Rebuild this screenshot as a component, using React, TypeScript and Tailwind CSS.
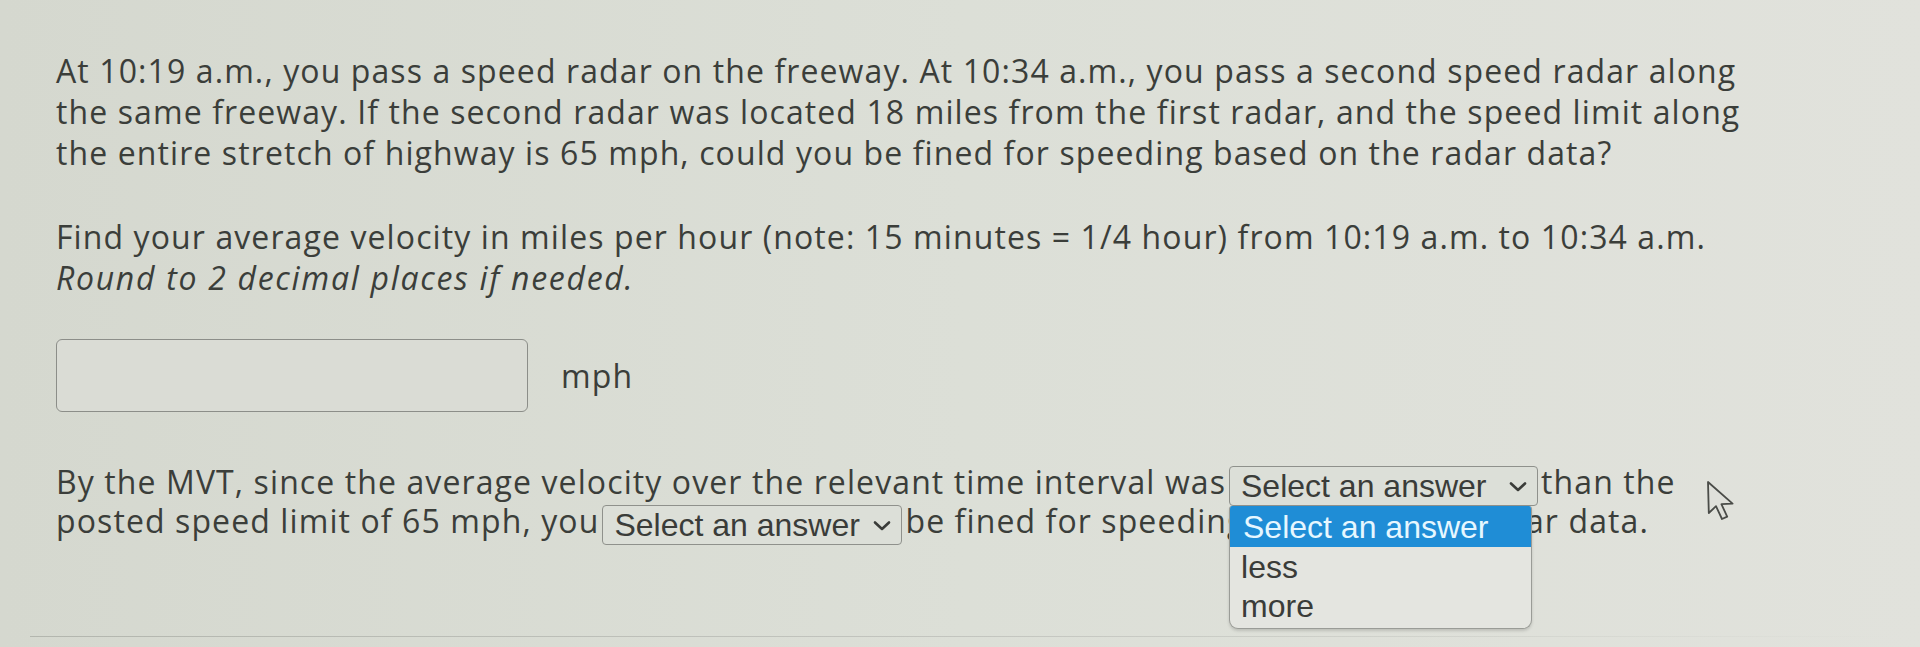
import React from 'react';

function Chevron() {
  return (
    <svg className="h-[11px] w-[18px]" viewBox="0 0 18 11" fill="none" stroke="#3a3c39" strokeWidth={2.6} strokeLinecap="round" strokeLinejoin="round">
      <path d="M2 2.5l7 6.5 7-6.5" />
    </svg>
  );
}

function FakeSelect({ width, open = false }: { width: string; open?: boolean }) {
  return (
    <span className="relative mx-[3px] -my-[3px] inline-block align-middle tracking-normal">
      <span
        className={`inline-flex h-[40px] items-center justify-between rounded-[4px] border-[1.5px] border-[#8f918c] bg-[#dcdfd8] pl-[11px] pr-[10px] font-['Liberation_Sans',Arial,sans-serif] text-[32px] leading-none text-[#3a3c39] ${width}`}
      >
        <span>Select an answer</span>
        <Chevron />
      </span>
      {open && (
        <span className="absolute left-0 top-full z-10 block w-[303px] overflow-hidden rounded-b-[9px] rounded-t-[3px] border-[1.5px] border-t-0 border-[#9a9c97] bg-[#e4e5e0] pb-[3px] font-['Liberation_Sans',Arial,sans-serif] text-[32px] leading-none text-[#3a3c39] shadow-[0_2px_3px_rgba(0,0,0,0.15)]">
          <span className="flex h-[41px] items-center bg-[#1f8dd6] pl-[13px] text-[#e6f7ff]">Select an answer</span>
          <span className="flex h-[39px] items-center pl-[11px]">less</span>
          <span className="flex h-[39px] items-center pl-[11px]">more</span>
        </span>
      )}
    </span>
  );
}

function Cursor() {
  return (
    <svg className="absolute left-[1706px] top-[480px] h-[42px] w-[30px]" viewBox="0 0 15 21" fill="#dfe0da" stroke="#4a4c48" strokeWidth={0.9} strokeLinejoin="round">
      <path d="M1 1l0.4 15.5 3.6-3.4 3 6.4 2.6-1.2-2.9-6.2 5.6-0.3z" />
    </svg>
  );
}

export default function App() {
  return (
    <div className="relative h-[647px] w-[1920px] overflow-hidden bg-gradient-to-r from-[#d5d8cf] via-[#dcdfd7] to-[#e1e2dc] font-['Open_Sans','Noto_Sans',sans-serif] text-[32px] leading-[41px] tracking-[1.1px] text-[#3b3e3a]">
      <div className="pl-[56px] pt-[50px]">
        <p className="whitespace-nowrap">
          At 10:19 a.m., you pass a speed radar on the freeway. At 10:34 a.m., you pass a second speed radar along
          <br />
          the same freeway. If the second radar was located 18 miles from the first radar, and the speed limit along
          <br />
          the entire stretch of highway is 65 mph, could you be fined for speeding based on the radar data?
        </p>

        <p className="mt-[43px] whitespace-nowrap">
          Find your average velocity in miles per hour (note: 15 minutes = 1/4 hour) from 10:19 a.m. to 10:34 a.m.
          <br />
          <em className="tracking-[1.7px]">Round to 2 decimal places if needed.</em>
        </p>

        <div className="mt-[41px] flex items-center gap-[33px]">
          <div className="h-[73px] w-[472px] rounded-[6px] border-[1.5px] border-[#8c8e89] bg-[#dadcd5]" />
          <span>mph</span>
        </div>

        <div className="mt-[49px] whitespace-nowrap">
          <div className="relative z-10 h-[39px]">
            By the MVT, since the average velocity over the relevant time interval was
            <FakeSelect width="w-[309px]" open />
            than the
          </div>
          <div className="h-[41px]">
            posted speed limit of 65 mph, you
            <FakeSelect width="w-[300px]" />
            be fined for speeding based on the radar data.
          </div>
        </div>
      </div>

      <div className="absolute bottom-[10px] left-[30px] right-[30px] h-[1.5px] bg-gradient-to-r from-[#b3b6ae] via-[#c3c5bf] to-transparent" />

      <Cursor />
    </div>
  );
}
